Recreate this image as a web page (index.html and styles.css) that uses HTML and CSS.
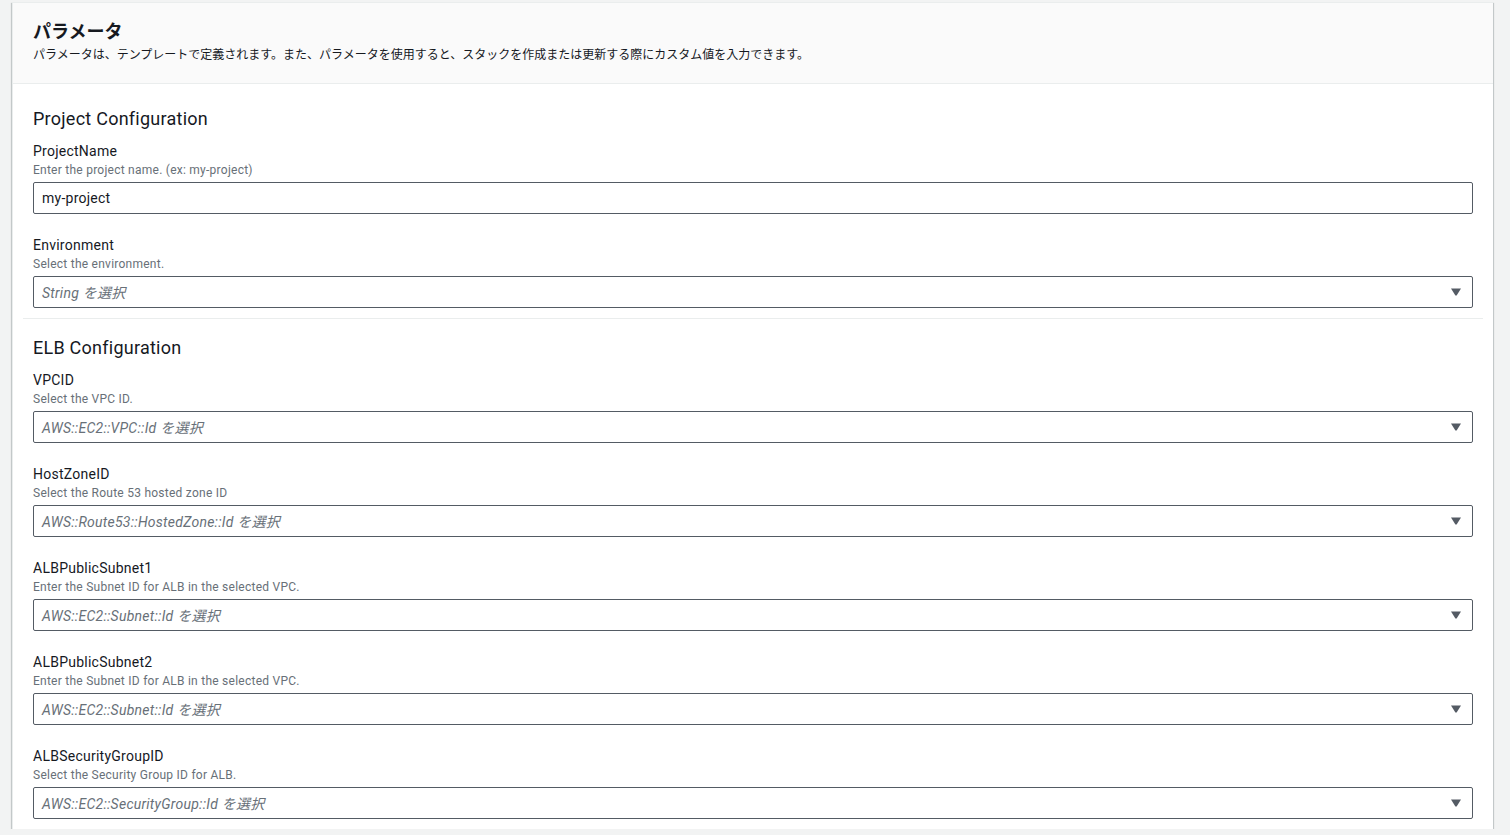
FILE: index.html
```html
<!DOCTYPE html>
<html lang="ja">
<head>
    <meta charset="UTF-8">
    <title>パラメータ</title>
    <link rel="stylesheet" href="styles.css">
</head>
<body>
    <div class="card">
        <div class="card-header">
            <h2>パラメータ</h2>
            <p>パラメータは、テンプレートで定義されます。また、パラメータを使用すると、スタックを作成または更新する際にカスタム値を入力できます。</p>
        </div>

        <div class="card-body">
            <div class="section">
                <h3>Project Configuration</h3>

                <div class="field">
                    <label>ProjectName</label>
                    <div class="hint">Enter the project name. (ex: my-project)</div>
                    <input class="text-input" type="text" value="my-project">
                </div>

                <div class="field">
                    <label>Environment</label>
                    <div class="hint">Select the environment.</div>
                    <div class="select">
                        <span class="placeholder">String を選択</span>
                        <svg class="caret" width="10" height="8" viewBox="0 0 10 8"><path d="M0 0.5h10L5.6 7.5h-1.2z" fill="#545b64"/></svg>
                    </div>
                </div>
            </div>

            <div class="section">
                <h3>ELB Configuration</h3>

                <div class="field">
                    <label>VPCID</label>
                    <div class="hint">Select the VPC ID.</div>
                    <div class="select">
                        <span class="placeholder">AWS::EC2::VPC::Id を選択</span>
                        <svg class="caret" width="10" height="8" viewBox="0 0 10 8"><path d="M0 0.5h10L5.6 7.5h-1.2z" fill="#545b64"/></svg>
                    </div>
                </div>

                <div class="field">
                    <label>HostZoneID</label>
                    <div class="hint">Select the Route 53 hosted zone ID</div>
                    <div class="select">
                        <span class="placeholder">AWS::Route53::HostedZone::Id を選択</span>
                        <svg class="caret" width="10" height="8" viewBox="0 0 10 8"><path d="M0 0.5h10L5.6 7.5h-1.2z" fill="#545b64"/></svg>
                    </div>
                </div>

                <div class="field">
                    <label>ALBPublicSubnet1</label>
                    <div class="hint">Enter the Subnet ID for ALB in the selected VPC.</div>
                    <div class="select">
                        <span class="placeholder">AWS::EC2::Subnet::Id を選択</span>
                        <svg class="caret" width="10" height="8" viewBox="0 0 10 8"><path d="M0 0.5h10L5.6 7.5h-1.2z" fill="#545b64"/></svg>
                    </div>
                </div>

                <div class="field">
                    <label>ALBPublicSubnet2</label>
                    <div class="hint">Enter the Subnet ID for ALB in the selected VPC.</div>
                    <div class="select">
                        <span class="placeholder">AWS::EC2::Subnet::Id を選択</span>
                        <svg class="caret" width="10" height="8" viewBox="0 0 10 8"><path d="M0 0.5h10L5.6 7.5h-1.2z" fill="#545b64"/></svg>
                    </div>
                </div>

                <div class="field">
                    <label>ALBSecurityGroupID</label>
                    <div class="hint">Select the Security Group ID for ALB.</div>
                    <div class="select">
                        <span class="placeholder">AWS::EC2::SecurityGroup::Id を選択</span>
                        <svg class="caret" width="10" height="8" viewBox="0 0 10 8"><path d="M0 0.5h10L5.6 7.5h-1.2z" fill="#545b64"/></svg>
                    </div>
                </div>
            </div>
        </div>
    </div>
</body>
</html>
```

FILE: styles.css
```css
body {
    margin: 0;
    padding: 2px 17px 0 12px;
    background-color: #f2f3f3;
    font-family: Roboto, "Noto Sans CJK JP", sans-serif;
    color: #16191f;
}
.card {
    background: white;
    border-top: 1px solid #eaeded;
    border-left: 1px solid #eaeded;
    box-shadow: 0 1px 1px 0 rgba(0,28,36,0.3), 1px 1px 1px 0 rgba(0,28,36,0.15), -1px 1px 1px 0 rgba(0,28,36,0.15);
}
.card-header {
    background: #fafafa;
    border-bottom: 1px solid #eaeded;
    padding: 16px 20px 20px;
}
.card-header h2 {
    margin: 0;
    font-size: 18px;
    line-height: 26px;
    font-weight: bold;
}
.card-header p {
    margin: 2px 0 0;
    font-size: 12px;
    line-height: 16px;
}
.card-body {
    padding: 6px 10px 0;
    letter-spacing: 0.25px;
}
.section {
    padding: 18px 10px 10px;
    border-bottom: 1px solid #eaeded;
}
.section:last-child {
    border-bottom: none;
}
.section h3 {
    margin: 0 0 10px;
    font-size: 18px;
    line-height: 22px;
    font-weight: normal;
}
.field {
    margin-bottom: 20px;
}
.field:last-child {
    margin-bottom: 0;
}
.field label {
    display: block;
    font-size: 14px;
    line-height: 22px;
}
.hint {
    font-size: 12px;
    line-height: 16px;
    color: #687078;
    margin-bottom: 4px;
}
.text-input,
.select {
    box-sizing: border-box;
    width: 100%;
    height: 32px;
    border: 1px solid #545b64;
    border-radius: 2px;
    padding: 0 11px 0 8px;
    font-family: inherit;
    font-size: 14px;
    letter-spacing: inherit;
    color: #16191f;
    background: white;
}
.text-input {
    display: block;
    outline: none;
}
.select {
    display: flex;
    align-items: center;
    justify-content: space-between;
}
.placeholder {
    font-style: italic;
    color: #687078;
}
.caret {
    display: block;
}
```
